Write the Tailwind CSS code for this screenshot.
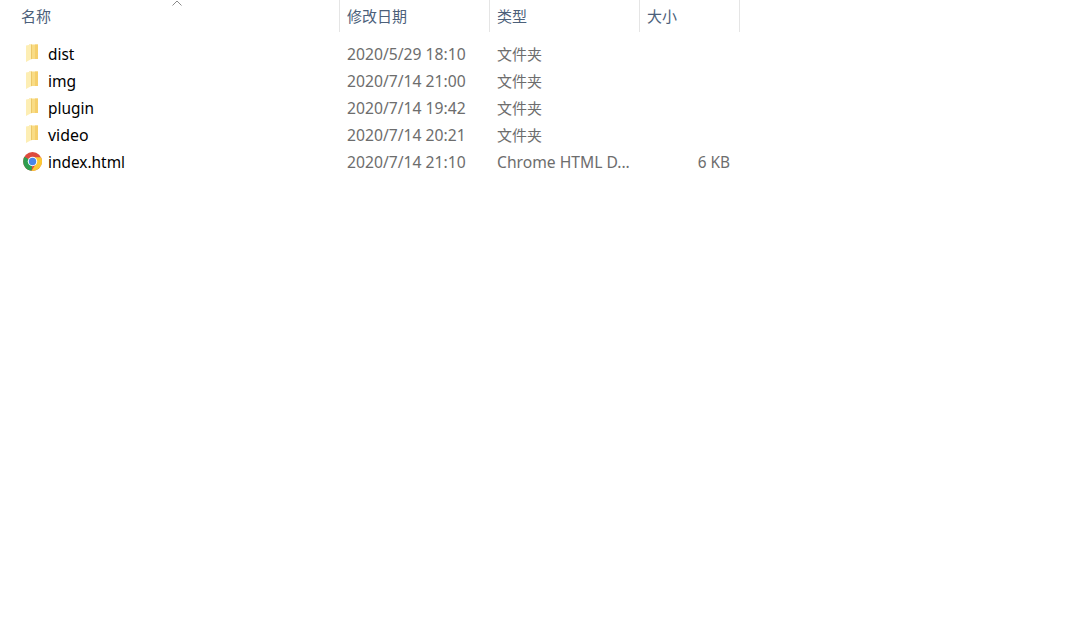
<!DOCTYPE html>
<html>

<head>
    <title>Index</title>
    <meta charset="UTF-8">
    <script src="https://cdn.jsdelivr.net/npm/@tailwindcss/browser@4"></script>
</head>

<body class="bg-white overflow-hidden font-['Noto_Sans','Noto_Sans_CJK_SC',sans-serif] text-[15px] leading-[27px]">
    <!-- header -->
    <div class="flex w-[740px] h-8 text-[#4c607a] relative">
        <div class="w-[340px] pl-[21px] pt-[3px] border-r border-[#e5e5e5]">名称</div>
        <div class="w-[150px] pl-[7px] pt-[3px] border-r border-[#e5e5e5]">修改日期</div>
        <div class="w-[150px] pl-[7px] pt-[3px] border-r border-[#e5e5e5]">类型</div>
        <div class="w-[100px] pl-[7px] pt-[3px] border-r border-[#e5e5e5]">大小</div>
        <svg class="absolute left-[172px] top-0" width="10" height="6" viewBox="0 0 10 6" fill="none" stroke="#8a8a8a">
            <path d="M0.5 5.5 L5 1 L9.5 5.5" />
        </svg>
    </div>

    <!-- rows -->
    <div class="w-[740px] mt-[9px] text-[#6d6d6d]">
        <div class="flex h-[27px]">
            <div class="w-[340px] pl-[26px] flex items-center gap-[10px] text-black">
                <svg class="w-3 h-[18px] shrink-0 -mt-[3px]" viewBox="0 0 12 18">
                    <path d="M3 0.5 H12 V15 H3 Z" fill="#f9dc85" />
                    <path d="M9 0.5 H12 V15 H9 Z" fill="#f5cf6c" />
                    <path d="M0 1.5 L5.5 0.5 V15 L0 18 Z" fill="#fdeeb4" />
                    <path d="M5 0.5 H6 V15 L5 15.3 Z" fill="#ecc768" />
                </svg>
                <span class="text-[15.4px]">dist</span>
            </div>
            <div class="w-[150px] pl-[7px] text-[15.7px]">2020/5/29 18:10</div>
            <div class="w-[150px] pl-[7px]">文件夹</div>
            <div class="w-[100px]"></div>
        </div>
        <div class="flex h-[27px]">
            <div class="w-[340px] pl-[26px] flex items-center gap-[10px] text-black">
                <svg class="w-3 h-[18px] shrink-0 -mt-[3px]" viewBox="0 0 12 18">
                    <path d="M3 0.5 H12 V15 H3 Z" fill="#f9dc85" />
                    <path d="M9 0.5 H12 V15 H9 Z" fill="#f5cf6c" />
                    <path d="M0 1.5 L5.5 0.5 V15 L0 18 Z" fill="#fdeeb4" />
                    <path d="M5 0.5 H6 V15 L5 15.3 Z" fill="#ecc768" />
                </svg>
                <span class="text-[15.6px]">img</span>
            </div>
            <div class="w-[150px] pl-[7px] text-[15.7px]">2020/7/14 21:00</div>
            <div class="w-[150px] pl-[7px]">文件夹</div>
            <div class="w-[100px]"></div>
        </div>
        <div class="flex h-[27px]">
            <div class="w-[340px] pl-[26px] flex items-center gap-[10px] text-black">
                <svg class="w-3 h-[18px] shrink-0 -mt-[3px]" viewBox="0 0 12 18">
                    <path d="M3 0.5 H12 V15 H3 Z" fill="#f9dc85" />
                    <path d="M9 0.5 H12 V15 H9 Z" fill="#f5cf6c" />
                    <path d="M0 1.5 L5.5 0.5 V15 L0 18 Z" fill="#fdeeb4" />
                    <path d="M5 0.5 H6 V15 L5 15.3 Z" fill="#ecc768" />
                </svg>
                <span class="text-[15.4px]">plugin</span>
            </div>
            <div class="w-[150px] pl-[7px] text-[15.7px]">2020/7/14 19:42</div>
            <div class="w-[150px] pl-[7px]">文件夹</div>
            <div class="w-[100px]"></div>
        </div>
        <div class="flex h-[27px]">
            <div class="w-[340px] pl-[26px] flex items-center gap-[10px] text-black">
                <svg class="w-3 h-[18px] shrink-0 -mt-[3px]" viewBox="0 0 12 18">
                    <path d="M3 0.5 H12 V15 H3 Z" fill="#f9dc85" />
                    <path d="M9 0.5 H12 V15 H9 Z" fill="#f5cf6c" />
                    <path d="M0 1.5 L5.5 0.5 V15 L0 18 Z" fill="#fdeeb4" />
                    <path d="M5 0.5 H6 V15 L5 15.3 Z" fill="#ecc768" />
                </svg>
                <span class="text-[15.9px]">video</span>
            </div>
            <div class="w-[150px] pl-[7px] text-[15.7px]">2020/7/14 20:21</div>
            <div class="w-[150px] pl-[7px]">文件夹</div>
            <div class="w-[100px]"></div>
        </div>
        <div class="flex h-[27px]">
            <div class="w-[340px] pl-[23px] flex items-center gap-[6px] text-black">
                <svg class="w-[19px] h-[19px] shrink-0 -mt-[3px]" viewBox="0 0 20 20">
                    <circle cx="10" cy="10" r="9.9" fill="#dd4b3e" />
                    <path d="M10 10 L1.5 5.1 A9.9 9.9 0 0 0 9 19.85 Z" fill="#2f9e4f" />
                    <path d="M10 5.5 H18.9 A9.9 9.9 0 0 1 9 19.85 L13.8 12 Z" fill="#fcc934" />
                    <circle cx="10" cy="10" r="5" fill="#fff" />
                    <circle cx="10" cy="10" r="3.9" fill="#4a86e8" />
                </svg>
                <span class="text-[15.4px]">index.html</span>
            </div>
            <div class="w-[150px] pl-[7px] text-[15.7px]">2020/7/14 21:10</div>
            <div class="w-[150px] pl-[7px] text-[15.65px]">Chrome HTML D...</div>
            <div class="w-[100px] pr-[10px] text-right text-[15.4px]">6 KB</div>
        </div>
    </div>
</body>

</html>
